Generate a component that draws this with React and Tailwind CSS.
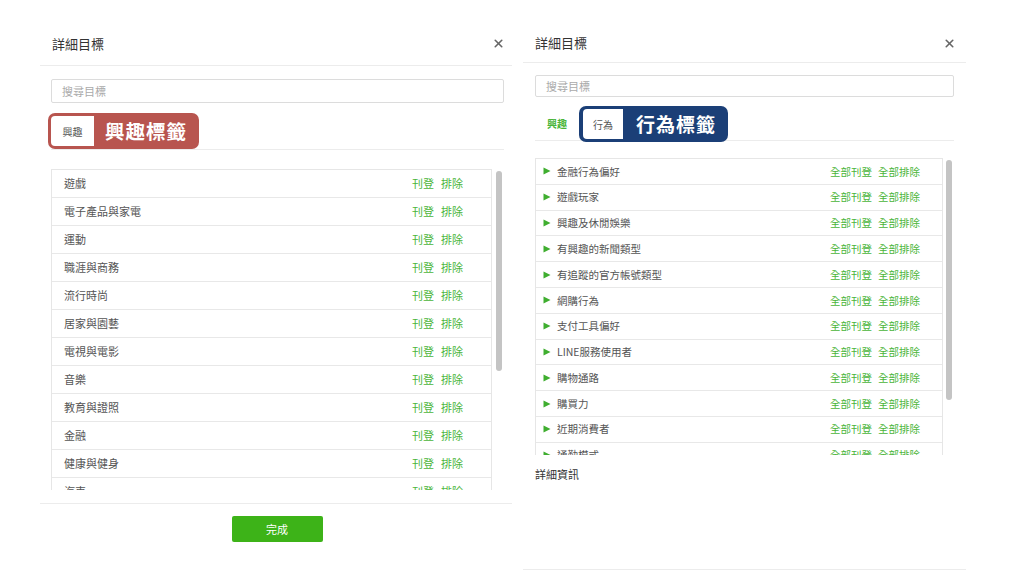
import { X } from 'lucide-react'

const font = { fontFamily: '"Noto Sans CJK TC", "Noto Sans", sans-serif' }

const interests = [
  '遊戲', '電子產品與家電', '運動', '職涯與商務', '流行時尚', '居家與園藝',
  '電視與電影', '音樂', '教育與證照', '金融', '健康與健身', '汽車',
]

const behaviors = [
  '金融行為偏好', '遊戲玩家', '興趣及休閒娛樂', '有興趣的新聞類型', '有追蹤的官方帳號類型',
  '網購行為', '支付工具偏好', 'LINE服務使用者', '購物通路', '購買力', '近期消費者', '通勤模式',
]

function Triangle() {
  return (
    <svg width="8" height="8" viewBox="0 0 8 8" className="shrink-0">
      <path d="M0.5 0.5 L7.5 4 L0.5 7.5 Z" fill="#3fae2f" />
    </svg>
  )
}

function CloseBtn() {
  return <X className="h-[13px] w-[13px] text-[#666]" strokeWidth={3} />
}

function InterestPanel() {
  return (
    <div className="mt-[22px] ml-[40px] w-[472px] shrink-0">
      <div className="flex h-[44px] items-center justify-between border-b border-[#ececec] pl-[12px] pr-[7px]">
        <span className="text-[13px] text-[#333]">詳細目標</span>
        <CloseBtn />
      </div>
      <div className="pl-[11px] pr-[8px]">
        <div className="mt-[13px] flex h-[24px] items-center rounded-[2px] border border-[#dcdcdc] px-[10px] text-[11px] text-[#aaa]">
          搜尋目標
        </div>
        <div className="flex h-[47px] items-end border-b border-[#ececec]">
          <div className="-ml-[3px] flex h-[36px] items-center rounded-[7px] bg-[#b8554f] pr-[12px]">
            <div className="ml-[3px] flex h-[30px] w-[43px] items-center justify-center rounded-l-[4px] bg-white text-[10px] text-[#555]">
              興趣
            </div>
            <span className="ml-[11px] text-[19.5px] font-bold tracking-[1px] text-white">興趣標籤</span>
          </div>
        </div>
        <div className="mt-[19px] flex">
          <div className="h-[321px] w-[441px] overflow-hidden border border-b-0 border-[#e6e6e6]">
            {interests.map((name) => (
              <div key={name} className="flex h-[28px] items-center justify-between border-b border-[#e8e8e8] pl-[12px] pr-[28px] text-[11px]">
                <span className="text-[#555]">{name}</span>
                <span className="flex gap-[7px] text-[#4ab539]">
                  <span>刊登</span>
                  <span>排除</span>
                </span>
              </div>
            ))}
          </div>
          <div className="ml-[4px] w-[7px] pt-[2px]">
            <div className="h-[200px] w-[6px] rounded-full bg-[#c4c4c4]" />
          </div>
        </div>
      </div>
      <div className="mt-[13px] flex justify-center border-t border-[#ececec] pt-[12px]">
        <button className="ml-[2px] h-[26px] w-[91px] rounded-[2px] bg-[#3db318] text-[11px] text-white">完成</button>
      </div>
    </div>
  )
}

function BehaviorPanel() {
  return (
    <div className="mt-[24px] ml-[11px] w-[443px] shrink-0">
      <div className="flex h-[39px] items-center justify-between border-b border-[#ececec] pl-[12px] pr-[10px]">
        <span className="text-[13px] text-[#333]">詳細目標</span>
        <CloseBtn />
      </div>
      <div className="px-[12px]">
        <div className="mt-[12px] flex h-[22px] items-center rounded-[2px] border border-[#dcdcdc] px-[10px] text-[11px] text-[#aaa]">
          搜尋目標
        </div>
        <div className="flex h-[44px] items-end border-b border-[#ececec]">
          <span className="mb-[9px] ml-[12px] text-[10px] font-bold text-[#4ab539]">興趣</span>
          <div className="-mb-[2px] ml-[12px] flex h-[36px] items-center rounded-[7px] bg-[#1b3f77] pr-[12px]">
            <div className="ml-[4px] flex h-[30px] w-[40px] items-center justify-center rounded-l-[4px] bg-white text-[10px] text-[#555]">
              行為
            </div>
            <span className="ml-[13px] text-[19px] font-bold tracking-[1px] text-white">行為標籤</span>
          </div>
        </div>
        <div className="mt-[17px] flex">
          <div className="h-[297px] w-[408px] overflow-hidden border border-b-0 border-[#e6e6e6]">
            {behaviors.map((name) => (
              <div key={name} className="flex h-[25.8px] items-center justify-between border-b border-[#e8e8e8] pl-[7px] pr-[22px] text-[10.5px]">
                <span className="flex items-center gap-[6px] text-[#555]">
                  <Triangle />
                  {name}
                </span>
                <span className="flex gap-[6px] text-[#4ab539]">
                  <span>全部刊登</span>
                  <span>全部排除</span>
                </span>
              </div>
            ))}
          </div>
          <div className="ml-[3px] w-[7px] pt-[2px]">
            <div className="h-[240px] w-[6px] rounded-full bg-[#c4c4c4]" />
          </div>
        </div>
        <div className="mt-[13px] text-[11px] leading-[12px] text-[#333]">詳細資訊</div>
      </div>
      <div className="mt-[89px] border-t border-[#ececec]" />
    </div>
  )
}

export default function App() {
  return (
    <div className="flex h-[576px] w-[1024px] items-start overflow-hidden bg-white" style={font}>
      <InterestPanel />
      <BehaviorPanel />
    </div>
  )
}
